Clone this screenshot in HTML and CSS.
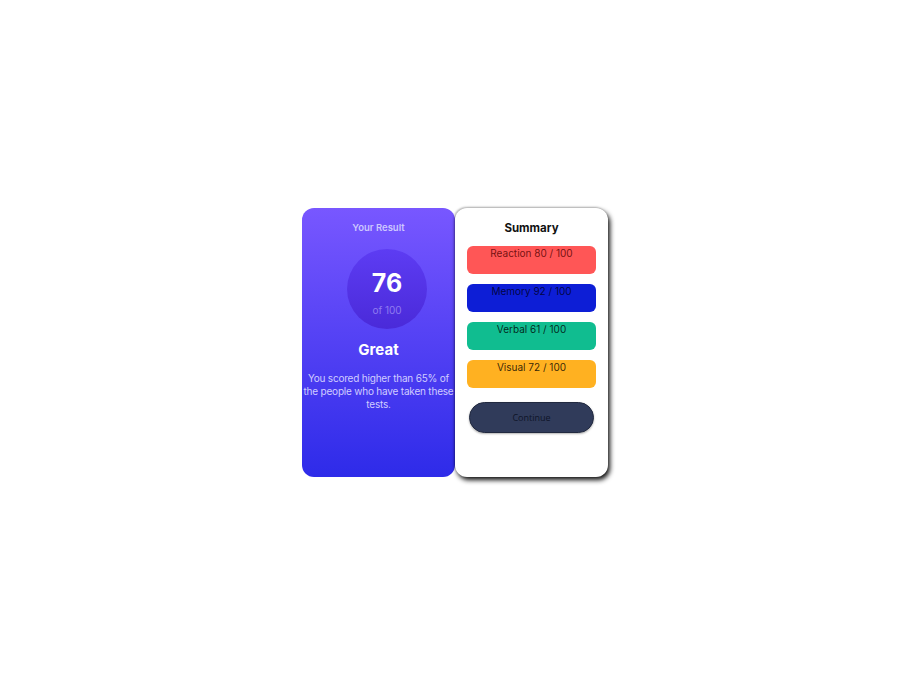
FILE: index.html
```html
<!DOCTYPE html>
<html>
<head>
<meta charset="utf-8">
<link rel="stylesheet" href="styles.css">
</head>
<body>
<div class="page">
  <div class="wrap">
    <section class="result">
      <h2 class="result-title">Your Result</h2>
      <div class="circle">
        <span class="score">76</span>
        <span class="of">of 100</span>
      </div>
      <h1 class="grade">Great</h1>
      <p class="desc">You scored higher than 65% of the people who have taken these tests.</p>
    </section>
    <section class="summary">
      <h2 class="summary-title">Summary</h2>
      <div class="item reaction">Reaction 80 / 100</div>
      <div class="item memory">Memory 92 / 100</div>
      <div class="item verbal">Verbal 61 / 100</div>
      <div class="item visual">Visual 72 / 100</div>
      <button class="continue">Continue</button>
    </section>
  </div>
</div>
</body>
</html>
```
FILE: styles.css
```css
* { box-sizing: border-box; }
html, body { margin: 0; padding: 0; background: #fff; }
body { font-family: Inter, "Noto Sans", sans-serif; }
.page {
  width: 900px;
  height: 675px;
  padding-top: 208px;
  padding-left: 302px;
}
.wrap {
  display: flex;
  width: 306px;
  height: 269px;
}
.result {
  width: 153px;
  height: 269px;
  border-radius: 12px;
  background: linear-gradient(180deg, #7857ff 0%, #2e2be9 100%);
  display: flex;
  flex-direction: column;
  align-items: center;
  text-align: center;
}
.result-title {
  margin: 13px 0 0;
  font-size: 9.5px;
  font-weight: 600;
  color: #cdc7ff;
  line-height: 14px;
}
.circle {
  margin-top: 14px;
  margin-left: 17px;
  width: 80px;
  height: 80px;
  border-radius: 50%;
  background: linear-gradient(180deg, #5d3cf3 0%, #4a2ad9 100%);
  display: flex;
  flex-direction: column;
  align-items: center;
}
.score {
  margin-top: 19px;
  font-size: 25px;
  font-weight: 700;
  color: #fff;
  line-height: 30px;
}
.of {
  margin-top: 6px;
  font-size: 10px;
  color: #8f7bf0;
  line-height: 12px;
}
.grade {
  margin: 12px 0 0 0;
  font-size: 15px;
  font-weight: 700;
  color: #fff;
  line-height: 18px;
}
.desc {
  margin: 13px 0 0;
  font-size: 10px;
  line-height: 13px;
  color: #d0ccff;
  width: 152px;
  padding: 0;
  letter-spacing: -0.2px;
}
.summary {
  width: 153px;
  height: 269px;
  background: #fff;
  border-radius: 12px;
  box-shadow: 2px 3px 5px rgba(0, 0, 0, 0.95), -1px -1px 2px rgba(0, 0, 0, 0.25);
  display: flex;
  flex-direction: column;
  padding: 0 12px;
}
.summary-title {
  margin: 12px 0 0;
  text-align: center;
  font-size: 11.5px;
  font-weight: 700;
  color: #111;
  line-height: 16px;
}
.item {
  height: 28px;
  border-radius: 6px;
  margin-top: 10px;
  font-size: 10px;
  line-height: 14px;
  text-align: center;
  color: rgba(0, 0, 0, 0.8);
}
.item.reaction { background: #ff5656; color: rgba(80, 0, 0, 0.8); }
.item.memory { background: #0d1ed6; color: rgba(0, 0, 40, 0.85); }
.item.verbal { background: #10bd90; }
.item.visual { background: #ffb121; }
.continue {
  margin: 14px 0 0 2px;
  width: 125px;
  height: 31px;
  border-radius: 16px;
  background: #303b5a;
  border: 1px solid #222a40;
  box-shadow: 0 1px 2px rgba(0,0,0,0.3);
  font-family: "Open Sans", sans-serif;
  font-size: 9px;
  color: #0e1428;
  padding: 0;
}
```
